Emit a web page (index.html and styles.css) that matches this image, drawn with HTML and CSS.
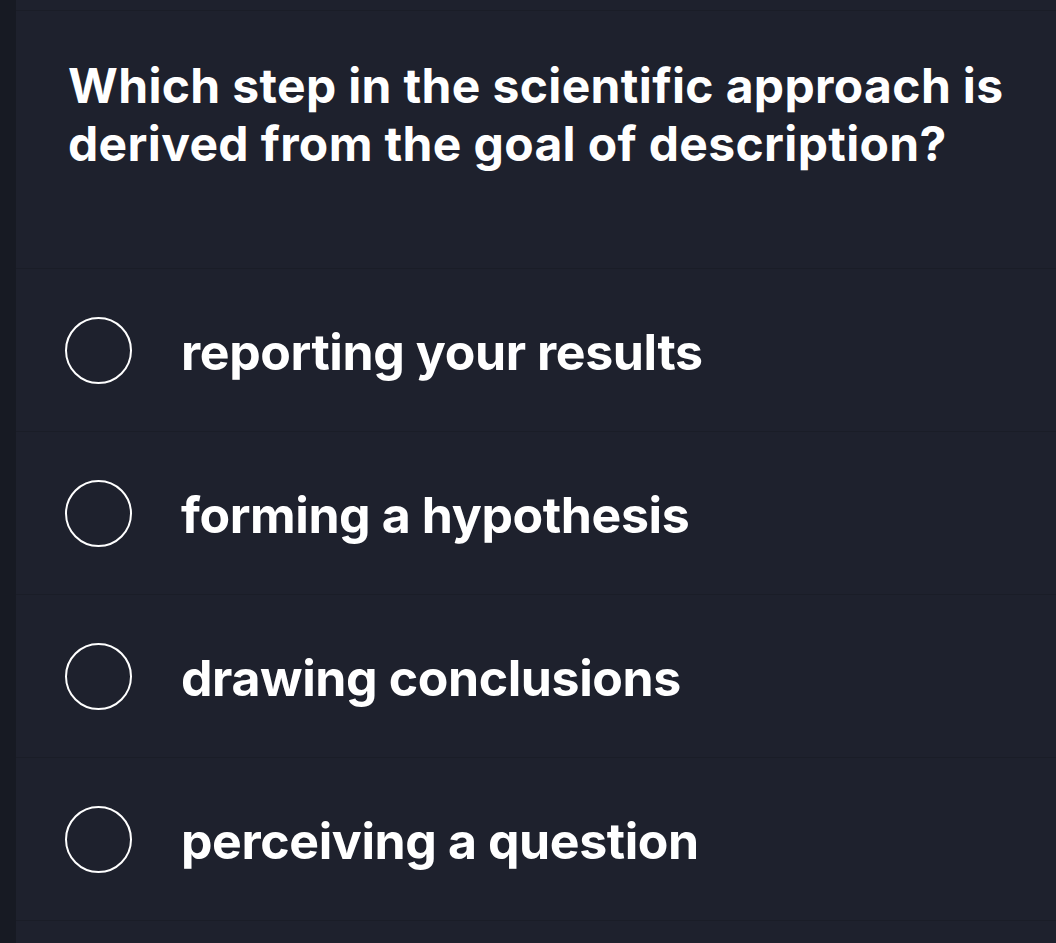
FILE: index.html
```html
<!DOCTYPE html>
<html>
<head>
<meta charset="utf-8">
<link rel="stylesheet" href="styles.css">
</head>
<body>
<div class="page">
  <div class="strip"></div>
  <div class="main">
    <div class="question">Which step in the scientific approach is derived from the goal of description?</div>
    <div class="option"><span class="radio"></span><span class="label">reporting your results</span></div>
    <div class="option"><span class="radio"></span><span class="label">forming a hypothesis</span></div>
    <div class="option"><span class="radio"></span><span class="label">drawing conclusions</span></div>
    <div class="option"><span class="radio"></span><span class="label">perceiving a question</span></div>
  </div>
</div>
</body>
</html>
```
FILE: styles.css
```css
html, body {
  margin: 0;
  padding: 0;
  background: #1e212d;
  height: 100%;
}
.page {
  display: flex;
  min-height: 943px;
  font-family: Inter, "Noto Sans", sans-serif;
  color: #ffffff;
}
.strip {
  width: 16px;
  background: #171a23;
  flex: none;
}
.main {
  flex: 1;
  padding-top: 10px;
  background: #1e212d;
}
.question {
  border-top: 1px solid #1a1d27;
  padding: 46px 20px 95px 52px;
  font-size: 48px;
  line-height: 58px;
  font-weight: 700;
  letter-spacing: 0.35px;
  border-bottom: 1px solid #1a1d27;
}
.option {
  height: 162px;
  display: flex;
  align-items: center;
  border-bottom: 1px solid #1a1d27;
  padding-left: 49px;
}
.radio {
  width: 63px;
  height: 63px;
  border: 2.5px solid #ffffff;
  border-radius: 50%;
  flex: none;
  margin-right: 49px;
}
.label {
  font-size: 50px;
  font-weight: 700;
  letter-spacing: -0.4px;
  padding-top: 3px;
}
```
